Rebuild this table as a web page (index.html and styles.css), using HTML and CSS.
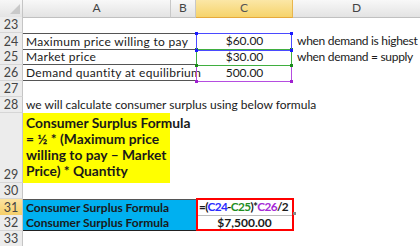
FILE: index.html
```html
<!DOCTYPE html>
<html>
<head>
<meta charset="utf-8">
<link rel="stylesheet" href="styles.css">
</head>
<body>
<div class="sheet">
  <div class="row head">
    <div class="corner"><svg width="23" height="17" viewBox="0 0 23 17"><polygon points="20,4 20,14 10,14" fill="#c9c9c9"/></svg></div>
    <div class="ch">A</div>
    <div class="ch">B</div>
    <div class="ch sel">C</div>
    <div class="ch last">D</div>
  </div>

  <div class="row"><div class="rh">23</div><div class="c"></div><div class="c"></div><div class="c"></div><div class="c"></div></div>

  <div class="row">
    <div class="rh">24</div>
    <div class="c txt bd bt">Maximum price willing to pay</div>
    <div class="c bd bt"></div>
    <div class="c num ref blue"><span class="box"><i class="hd tl"></i><i class="hd tr"></i><i class="hd bl"></i><i class="hd br"></i></span>$60.00</div>
    <div class="c dtxt">when demand is highest</div>
  </div>

  <div class="row">
    <div class="rh">25</div>
    <div class="c txt bd">Market price</div>
    <div class="c bd"></div>
    <div class="c num ref green"><span class="box"><i class="hd tl"></i><i class="hd tr"></i><i class="hd bl"></i><i class="hd br"></i></span>$30.00</div>
    <div class="c dtxt">when demand = supply</div>
  </div>

  <div class="row">
    <div class="rh">26</div>
    <div class="c txt bd">Demand quantity at equilibrium</div>
    <div class="c bd"></div>
    <div class="c num ref purple"><span class="box"><i class="hd tl"></i><i class="hd tr"></i><i class="hd bl"></i><i class="hd br"></i></span>500.00</div>
    <div class="c"></div>
  </div>

  <div class="row"><div class="rh">27</div><div class="c"></div><div class="c"></div><div class="c"></div><div class="c"></div></div>

  <div class="row">
    <div class="rh">28</div>
    <div class="c note span4">we will calculate consumer surplus using below formula</div>
  </div>

  <div class="row tall">
    <div class="rh">29</div>
    <div class="c yellow">Consumer Surplus Formula<br>= ½ * (Maximum price<br>willing to pay – Market<br>Price) * Quantity</div>
    <div class="c"></div><div class="c"></div><div class="c"></div>
  </div>

  <div class="row"><div class="rh">30</div><div class="c"></div><div class="c"></div><div class="c"></div><div class="c"></div></div>

  <div class="row">
    <div class="rh act">31</div>
    <div class="c blue-fill bt span2">Consumer Surplus Formula</div>
    <div class="c formula"><span class="red"></span><span class="fh"></span>=(<span class="rb">C24</span>-<span class="rg">C25</span>)*<span class="rp">C26</span>/2</div>
    <div class="c"></div>
  </div>

  <div class="row">
    <div class="rh">32</div>
    <div class="c blue-fill span2">Consumer Surplus Formula</div>
    <div class="c num bold">$7,500.00</div>
    <div class="c"></div>
  </div>

  <div class="row"><div class="rh">33</div><div class="c"></div><div class="c"></div><div class="c"></div><div class="c"></div></div>
</div>
</body>
</html>
```

FILE: styles.css
```css
html, body {
  margin: 0;
  padding: 0;
  background: #ffffff;
}
body {
  font-family: Lato, "Liberation Sans", sans-serif;
  font-size: 12px;
  color: #1a1a1a;
  width: 420px;
  height: 246px;
  overflow: hidden;
}
.sheet {
  display: flex;
  flex-direction: column;
}
.row {
  display: grid;
  grid-template-columns: 23px 148px 25px 97px 127px;
  height: 16px;
}
.row.tall {
  height: 70px;
}
.head {
  height: 17px;
}
.corner {
  background: linear-gradient(#f7f7f7, #e4e4e4);
  border-right: 1px solid #c5c5c5;
  border-bottom: 1px solid #c5c5c5;
  box-sizing: border-box;
}
.corner svg { display: block; }
.ch {
  box-sizing: border-box;
  background: linear-gradient(#f8f8f8, #e3e3e3);
  border-right: 1px solid #c8c8c8;
  border-bottom: 1px solid #c0c0c0;
  text-align: center;
  line-height: 16px;
  font-size: 12px;
  color: #444;
}
.ch.sel {
  background: linear-gradient(#fbe7a6, #f6d36b);
  border-right-color: #e9b64d;
  border-bottom-color: #e6a93c;
  color: #555;
}
.ch.last { border-right: none; }
.rh {
  box-sizing: border-box;
  background: #ececec;
  border-right: 1px solid #c5c5c5;
  border-bottom: 1px solid #d6d6d6;
  text-align: center;
  font-size: 12.5px;
  color: #444;
  line-height: 15px;
  display: flex;
  align-items: flex-end;
  justify-content: center;
}
.rh.act {
  background: linear-gradient(#fbe3a0, #f5cf6a);
  border-bottom-color: #e5b04a;
}
.c {
  box-sizing: border-box;
  line-height: 15px;
  white-space: nowrap;
  position: relative;
}
.txt {
  padding-left: 3px;
  letter-spacing: 0.3px;
}
.note {
  padding-left: 3px;
}
.dtxt {
  padding-left: 4px;
  letter-spacing: -0.3px;
  overflow: visible;
}
.span4 { grid-column: span 4; }
.span2 { grid-column: span 2; }
.bd { border-bottom: 1px solid #555; }
.bt { border-top: 1px solid #555; }
.num {
  text-align: center;
}
.bold { font-weight: bold; }

.ref .box {
  position: absolute;
  left: 0;
  top: 0;
  right: 1px;
  bottom: -1px;
  border: 1px solid;
  pointer-events: none;
}
.ref.blue .box { border-color: #4a4aff; z-index: 3; }
.ref.green .box { border-color: #3fae3f; z-index: 2; }
.ref.purple .box { border-color: #b54de0; z-index: 1; }
.hd {
  position: absolute;
  width: 3px;
  height: 3px;
}
.blue .hd { background: #1a1aff; }
.green .hd { background: #1a8a1a; }
.purple .hd { background: #a020d0; }
.hd.tl { left: -2px; top: -2px; }
.hd.tr { right: -2px; top: -2px; }
.hd.bl { left: -2px; bottom: -2px; }
.hd.br { right: -2px; bottom: -2px; }

.yellow {
  background: #ffff00;
  font-weight: bold;
  font-size: 13.8px;
  line-height: 16px;
  padding: 0 0 4px 3px;
  display: flex;
  align-items: flex-end;
  margin-right: 1px;
}
.blue-fill {
  background: #00b0f0;
  font-weight: bold;
  padding-left: 3px;
  border-bottom: 1px solid #222;
}
.formula {
  font-weight: bold;
  padding-left: 3px;
  letter-spacing: -0.65px;
  font-size: 11.8px;
  border-bottom: 1px solid #bdbdbd;
}
.rb { color: #2b2bff; }
.rg { color: #1f8f1f; }
.rp { color: #a52ad6; }
.red {
  position: absolute;
  left: 0;
  top: -1px;
  width: 98px;
  height: 33px;
  box-sizing: border-box;
  border: 2px solid #ff0000;
  z-index: 4;
}
.fh {
  position: absolute;
  left: 97px;
  top: 13px;
  width: 3px;
  height: 3px;
  background: #888;
  z-index: 5;
}
```
